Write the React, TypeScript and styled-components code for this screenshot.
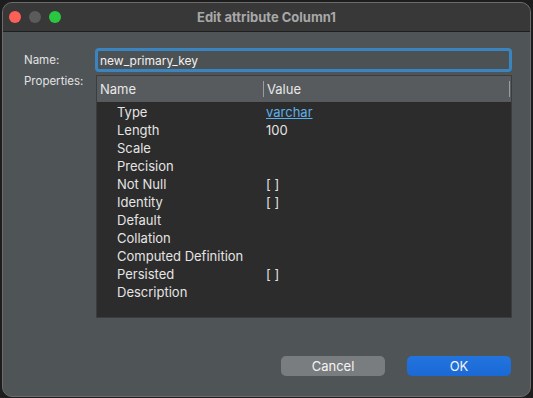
import { FC } from 'react'
import styled, { createGlobalStyle } from 'styled-components'

const GlobalStyle = createGlobalStyle`
  html, body {
    margin: 0;
    padding: 0;
    background: #1d1d1d;
    font-family: Inter, "Liberation Sans", sans-serif;
  }
`
const Screen = styled.div`
  width: 533px;
  height: 398px;
  padding: 2px 2px 3px 2px;
  box-sizing: border-box;
`
const Window = styled.div`
  display: flex;
  flex-direction: column;
  height: 100%;
  border: 1px solid #6c6c6c;
  border-radius: 10px;
  overflow: hidden;
  background: #4f5457;
`
const TitleBar = styled.div`
  position: relative;
  display: flex;
  align-items: center;
  justify-content: center;
  height: 28px;
  background: #383838;
  border-bottom: 1px solid #1f1f1f;
  flex-shrink: 0;
`
const Lights = styled.div`
  position: absolute;
  left: 6px;
  top: 8px;
  display: flex;
  gap: 8px;
`
const Light = styled.span<{ $color: string }>`
  width: 12px;
  height: 12px;
  border-radius: 50%;
  background: ${p => p.$color};
`
const Title = styled.div`
  font-size: 13px;
  font-weight: 700;
  color: #a8a8a8;
`
const Body = styled.div`
  display: flex;
  flex-direction: column;
  padding: 16px 18px 0 21px;
  flex: 1;
`
const FormRow = styled.div`
  display: flex;
  align-items: flex-start;
`
const Label = styled.div<{ $top?: number }>`
  width: 71px;
  font-size: 11.5px;
  color: #e2e2e2;
  padding-top: ${p => p.$top ?? 0}px;
  line-height: 16px;
`
const NameInput = styled.div`
  flex: 1;
  height: 24px;
  box-sizing: border-box;
  border: 3px solid #3a84c0;
  border-radius: 4px;
  display: flex;
  align-items: center;
  padding-left: 2px;
  font-size: 12px;
  color: #f2f2f2;
  background: #4c5154;
`
const Table = styled.div`
  flex: 1;
  margin-left: 1px;
  margin-top: 3px;
  height: 243px;
  box-sizing: border-box;
  border: 1px solid #3b3d3f;
  background: #2c2c2c;
  display: flex;
  flex-direction: column;
`
const Header = styled.div`
  display: grid;
  grid-template-columns: 166px 1fr;
  align-items: center;
  height: 26px;
  background: #575b5e;
  border-bottom: 1px solid #2a2a2a;
  font-size: 13px;
  color: #e8e8e8;
`
const HeadCell = styled.div<{ $divider?: boolean }>`
  display: flex;
  align-items: center;
  padding-left: 3px;
  height: 16px;
  border-left: ${p => (p.$divider ? '1px solid #9a9c9e' : 'none')};
  border-right: ${p => (p.$divider ? '1px solid #9a9c9e' : 'none')};
  margin-right: ${p => (p.$divider ? '1px' : '0')};
`
const Row = styled.div`
  display: grid;
  grid-template-columns: 169px 1fr;
  align-items: center;
  height: 18px;
  font-size: 13px;
  color: #e4e4e4;
`
const KeyCell = styled.div`
  padding-left: 20px;
`
const ValueCell = styled.div<{ $link?: boolean }>`
  color: ${p => (p.$link ? '#5cb0ea' : '#e4e4e4')};
  text-decoration: ${p => (p.$link ? 'underline' : 'none')};
`
const Buttons = styled.div`
  display: flex;
  justify-content: flex-end;
  gap: 22px;
  margin-top: 38px;
  padding-right: 1px;
`
const Button = styled.div<{ $primary?: boolean }>`
  width: 104px;
  height: 20px;
  border-radius: 5px;
  display: flex;
  align-items: center;
  justify-content: center;
  font-size: 13px;
  color: #f4f4f4;
  background: ${p => (p.$primary ? 'linear-gradient(#2474e0, #1a69d6)' : '#7a7d80')};
`

const rows: [string, string, boolean?][] = [
  ['Type', 'varchar', true],
  ['Length', '100'],
  ['Scale', ''],
  ['Precision', ''],
  ['Not Null', '[ ]'],
  ['Identity', '[ ]'],
  ['Default', ''],
  ['Collation', ''],
  ['Computed Definition', ''],
  ['Persisted', '[ ]'],
  ['Description', ''],
]

const App: FC = () => (
  <Screen>
    <GlobalStyle />
    <Window>
      <TitleBar>
        <Lights>
          <Light $color={'#fe5f57'} />
          <Light $color={'#5b5b5b'} />
          <Light $color={'#2ac840'} />
        </Lights>
        <Title>Edit attribute Column1</Title>
      </TitleBar>
      <Body>
        <FormRow>
          <Label $top={4}>Name:</Label>
          <NameInput>new_primary_key</NameInput>
        </FormRow>
        <FormRow>
          <Label $top={1}>Properties:</Label>
          <Table>
            <Header>
              <HeadCell>Name</HeadCell>
              <HeadCell $divider>Value</HeadCell>
            </Header>
            {rows.map(([key, value, link]) => (
              <Row key={key}>
                <KeyCell>{key}</KeyCell>
                <ValueCell $link={link}>{value}</ValueCell>
              </Row>
            ))}
          </Table>
        </FormRow>
        <Buttons>
          <Button>Cancel</Button>
          <Button $primary>OK</Button>
        </Buttons>
      </Body>
    </Window>
  </Screen>
)

export default App
